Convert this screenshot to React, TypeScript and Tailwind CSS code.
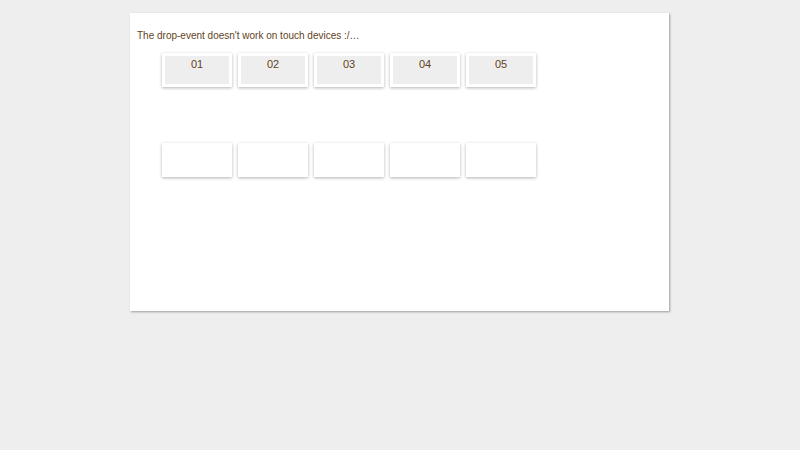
const labels = ['01', '02', '03', '04', '05'];

export default function App() {
  return (
    <div className="min-h-screen w-full bg-[#eeeeee] pt-[13px] pl-[130px] font-['Liberation_Sans',Arial,sans-serif]">
      <div className="w-[539px] h-[298px] bg-white shadow-[1px_1px_2px_rgba(0,0,0,0.35)] pt-[17px] pl-[7px]">
        <p className="text-[10px] leading-[12px] text-[#634321]">
          The drop-event doesn't work on touch devices :/…
        </p>
        <div className="ml-[25px] mt-[11px] flex gap-[6px]">
          {labels.map((l) => (
            <div
              key={l}
              className="w-[70px] h-[34px] border-[3px] border-white bg-[#eeeeee] shadow-[0_1px_3px_rgba(0,0,0,0.3)] text-center text-[11px] leading-[12px] pt-[2px] text-[#634321]"
            >
              {l}
            </div>
          ))}
        </div>
        <div className="ml-[25px] mt-[56px] flex gap-[6px]">
          {labels.map((l) => (
            <div
              key={l}
              className="w-[70px] h-[34px] bg-white shadow-[0_1px_3px_rgba(0,0,0,0.3)]"
            />
          ))}
        </div>
      </div>
    </div>
  );
}
